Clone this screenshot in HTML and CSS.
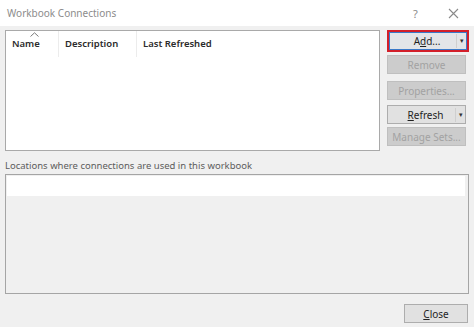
FILE: index.html
```html
<!DOCTYPE html>
<html lang="en">
<head>
  <meta charset="UTF-8" />
  <title>Workbook Connections</title>
  <link rel="stylesheet" href="styles.css">
</head>
<body>
  <div class="dialog">
    <div class="titlebar">
      <span class="title">Workbook Connections</span>
      <span class="help">?</span>
      <span class="close-x">
        <svg width="11" height="11" viewBox="0 0 11 11"><path d="M1 1 L10 10 M10 1 L1 10" stroke="#8a8a8a" stroke-width="1.1" fill="none"/></svg>
      </span>
    </div>

    <div class="body">
      <div class="top">
        <div class="list">
          <div class="list-head">
            <div class="col col-name">
              <svg class="caret" width="9" height="5" viewBox="0 0 9 5"><path d="M0.5 4.5 L4.5 0.8 L8.5 4.5" stroke="#7a7a7a" stroke-width="1" fill="none"/></svg>
              Name
            </div>
            <div class="col col-desc">Description</div>
            <div class="col col-last">Last Refreshed</div>
          </div>
        </div>

        <div class="side">
          <div class="focus-ring">
            <div class="btn btn-split btn-add">
              <span class="btn-label">A<u>d</u>d...</span>
              <span class="arrow">&#9662;</span>
            </div>
          </div>
          <div class="btn disabled">Remove</div>
          <div class="btn disabled gap">Properties...</div>
          <div class="btn btn-split gap-sm">
            <span class="btn-label"><u>R</u>efresh</span>
            <span class="arrow">&#9662;</span>
          </div>
          <div class="btn disabled">Manage Sets...</div>
        </div>
      </div>

      <div class="loc-label">Locations where connections are used in this workbook</div>
      <div class="loc-box">
        <div class="loc-row"></div>
      </div>

      <div class="footer">
        <div class="btn btn-close"><u>C</u>lose</div>
      </div>
    </div>
  </div>
</body>
</html>
```

FILE: styles.css
```css
* {
  box-sizing: border-box;
}

body {
  margin: 0;
  width: 474px;
  height: 327px;
  overflow: hidden;
  background: #f0f0f0;
  font-family: "Noto Sans", "Open Sans", sans-serif;
  font-size: 9.5px;
  color: #1f1f1f;
}

.dialog {
  height: 327px;
  display: flex;
  flex-direction: column;
}

.titlebar {
  flex-shrink: 0;
  height: 26px;
  background: #ffffff;
  display: flex;
  align-items: center;
  padding-left: 7px;
}

.title {
  flex: 1;
  font-size: 10px;
  color: #8c8c8c;
}

.help {
  width: 14px;
  font-size: 11px;
  color: #8a8a8a;
  margin-right: 21px;
}

.close-x {
  width: 11px;
  height: 11px;
  margin-right: 15px;
  display: flex;
}

.body {
  flex: 1;
  padding: 4px 5px 0 5px;
}

.top {
  display: flex;
  gap: 7px;
}

.list {
  width: 377px;
  height: 121px;
  background: #ffffff;
  border: 1px solid #a9a9a9;
}

.list-head {
  display: flex;
  height: 26px;
}

.col {
  position: relative;
  font-weight: 600;
  color: #2b2b2b;
  padding: 6px 0 0 6px;
  border-right: 1px solid #ececec;
}

.col-name {
  width: 53px;
}

.col-desc {
  width: 78px;
}

.col-last {
  flex: 1;
  border-right: none;
}

.caret {
  position: absolute;
  left: 24px;
  top: 1px;
}

.side {
  width: 82px;
  display: flex;
  flex-direction: column;
  gap: 3px;
}

.focus-ring {
  border: 2px solid #d31f2a;
  height: 22px;
}

.btn {
  height: 19px;
  width: 79px;
  background: #e1e1e1;
  border: 1px solid #adadad;
  display: flex;
  align-items: center;
  justify-content: center;
  color: #1f1f1f;
  font-size: 10px;
}

.btn.disabled {
  background: #cccccc;
  border-color: #bfbfbf;
  color: #a2a2a2;
}

.btn-add {
  width: 78px;
  height: 18px;
  border: 1px solid #3a79c8;
  background: #e3e5e8;
}

.btn-split {
  justify-content: flex-start;
}

.btn-split .btn-label {
  flex: 1;
  text-align: center;
  padding-left: 8px;
}

.arrow {
  width: 10px;
  font-size: 7px;
  color: #333333;
  border-left: 1px solid #cfcfcf;
  text-align: center;
  line-height: 14px;
}

.gap {
  margin-top: 4px;
}

.gap-sm {
  margin-top: 2px;
}

.loc-label {
  margin-top: 8px;
  color: #5c5c5c;
  height: 14px;
  line-height: 14px;
}

.loc-box {
  margin-top: 1px;
  width: 464px;
  height: 120px;
  border: 1px solid #a5a5a5;
  background: #f0f0f0;
  padding: 1px 3px 0 1px;
}

.loc-row {
  height: 20px;
  background: #ffffff;
}

.footer {
  display: flex;
  justify-content: flex-end;
  padding: 10px 1px 0 0;
}

.btn-close {
  width: 64px;
  height: 19px;
}
```
